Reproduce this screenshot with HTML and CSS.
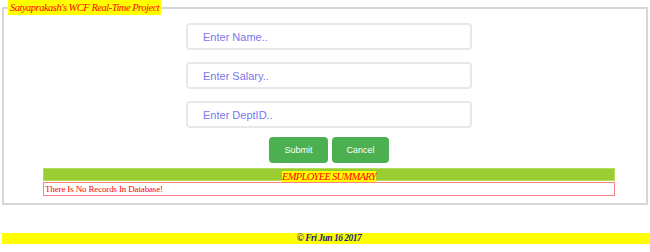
FILE: index.html
```html
<!DOCTYPE html>
<html lang="en">
<head>
    <meta charset="UTF-8">
    <title>Satyaprakash's WCF Real-Time Project</title>
    <link rel="stylesheet" href="styles.css">
</head>
<body>
    <fieldset class="panel">
        <legend class="panel-title">Satyaprakash's WCF Real-Time Project</legend>
        <div class="panel-body">
            <form class="emp-form">
                <input type="text" class="emp-input" placeholder="Enter Name..">
                <input type="text" class="emp-input" placeholder="Enter Salary..">
                <input type="text" class="emp-input" placeholder="Enter DeptID..">
                <div class="emp-actions">
                    <button type="button" class="emp-btn">Submit</button>
                    <button type="button" class="emp-btn">Cancel</button>
                </div>
            </form>

            <div class="summary">
                <div class="summary-head"><span>EMPLOYEE SUMMARY</span></div>
                <div class="summary-empty">There Is No Records In Database!</div>
            </div>
        </div>
    </fieldset>

    <footer class="page-footer">&copy; Fri Jun 16 2017</footer>
</body>
</html>
```

FILE: styles.css
```css
* {
    box-sizing: border-box;
}

body {
    margin: 0;
    font-family: 'Liberation Serif', 'Times New Roman', serif;
    background-color: #fff;
}

.panel {
    margin: 0 2px;
    border: 2px solid #d6d6d6;
    padding: 8px 4px 7px 4px;
    min-width: 0;
}

.panel-title {
    padding: 0 2px;
    background-color: #ffff00;
    color: #ff0000;
    font-style: italic;
    font-size: 10.5px;
    letter-spacing: -0.5px;
    line-height: 15px;
}

.panel-body {
    padding-left: 8px;
}

.emp-form {
    display: flex;
    flex-direction: column;
    align-items: center;
    gap: 12px;
    margin: 0;
}

.emp-input {
    width: 286px;
    height: 27px;
    border: 2px solid #e8e8e8;
    border-radius: 4px;
    padding: 0 0 0 15px;
    font-family: 'Liberation Sans', Arial, sans-serif;
    font-size: 11px;
    outline: none;
}

.emp-input::placeholder {
    color: #7777ee;
}

.emp-actions {
    display: flex;
    gap: 4px;
    margin-top: -3px;
}

.emp-btn {
    width: 59px;
    height: 26px;
    border: none;
    border-radius: 4px;
    background-color: #4caf50;
    color: #fff;
    font-family: 'Liberation Sans', Arial, sans-serif;
    font-size: 9px;
    padding: 0;
}

.emp-btn + .emp-btn {
    width: 57px;
}

.summary {
    width: 572px;
    margin: 5px auto 0;
}

.summary-head {
    height: 13px;
    background-color: #9acd32;
    border: 1px solid #b4dd5a;
    text-align: center;
    line-height: 11px;
}

.summary-head span {
    display: inline-block;
    background-color: #ffff00;
    color: #ff0000;
    font-style: italic;
    font-size: 10.5px;
    letter-spacing: -0.7px;
    line-height: 11px;
}

.summary-empty {
    margin-top: 1px;
    height: 14px;
    border: 1px solid #ff8080;
    color: #ff0000;
    font-size: 9px;
    letter-spacing: -0.15px;
    line-height: 12px;
    padding-left: 1px;
}

.page-footer {
    margin: 28px 0 0 2px;
    padding-left: 6px;
    height: 11px;
    background-color: #ffff00;
    color: #1c1c8c;
    font-weight: bold;
    font-style: italic;
    font-size: 9.5px;
    letter-spacing: -0.5px;
    line-height: 11px;
    text-align: center;
}
```
